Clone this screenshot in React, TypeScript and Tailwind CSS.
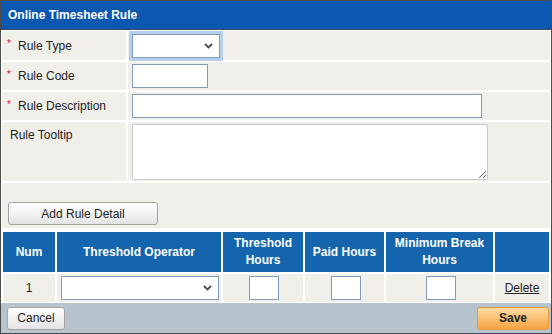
import React from "react";

const Chevron = () => (
  <svg width="9" height="6" viewBox="0 0 9 6" className="absolute right-[7px] top-1/2 -translate-y-1/2 pointer-events-none">
    <path d="M1 1 L4.5 4.5 L8 1" fill="none" stroke="#4a4a4a" strokeWidth="1.8" />
  </svg>
);

const Req = () => (
  <span className="inline-block w-[11px] text-[#e0141e] text-[10px] relative -top-[2px]">*</span>
);

export default function App() {
  const cell = "bg-[#f0efea]";
  const th = "bg-[#1465ae] text-white font-bold text-[12px] leading-[17px] flex items-center justify-center text-center";
  return (
    <div
      className="w-[552px] h-[334px] border border-[#4a4a4a] bg-white flex flex-col text-[12px] text-[#222]"
      style={{ fontFamily: '"Liberation Sans", Arial, sans-serif' }}
    >
      <div className="h-[29px] shrink-0 bg-[#0c57b0] border-b border-[#3b4a5e] pl-[7px] flex items-center text-white font-bold text-[12px]">
        Online Timesheet Rule
      </div>
      <div className="mt-[1px] pl-[1px] pr-[1px] flex flex-col gap-[2px]">
        <div className="flex gap-[2px] h-[29px]">
          <div className={`${cell} w-[124px] pl-[5px] flex items-center`}>
            <Req />Rule Type
          </div>
          <div className={`${cell} flex-1 pl-[4px] flex items-center`}>
            <div className="relative w-[88px] h-[24px] shadow-[0_0_0_3px_#b6cfee]">
              <select className="appearance-none w-full h-full border border-[#7f9db9] bg-white outline-none" />
              <Chevron />
            </div>
          </div>
        </div>
        <div className="flex gap-[2px] h-[28px]">
          <div className={`${cell} w-[124px] pl-[5px] flex items-center`}>
            <Req />Rule Code
          </div>
          <div className={`${cell} flex-1 pl-[4px] flex items-center`}>
            <input className="w-[76px] h-[24px] border border-[#7f9db9] bg-white outline-none" />
          </div>
        </div>
        <div className="flex gap-[2px] h-[28px]">
          <div className={`${cell} w-[124px] pl-[5px] flex items-center`}>
            <Req />Rule Description
          </div>
          <div className={`${cell} flex-1 pl-[4px] flex items-center`}>
            <input className="w-[350px] h-[24px] border border-[#7f9db9] bg-white outline-none" />
          </div>
        </div>
        <div className="flex gap-[2px] h-[59px]">
          <div className={`${cell} w-[124px] pl-[8px] pt-[4px]`}>Rule Tooltip</div>
          <div className={`${cell} flex-1 pl-[4px] flex items-center`}>
            <textarea className="w-[356px] h-[56px] border border-[#c8c8c8] rounded-[2px] bg-white outline-none" />
          </div>
        </div>
        <div className={`${cell} h-[45px] pl-[6px] pb-[3px] flex items-end`}>
          <button className="w-[150px] h-[23px] border border-[#a3a3a3] rounded-[3px] bg-gradient-to-b from-white to-[#e4e4e4] text-[12px] text-[#222]">
            Add Rule Detail
          </button>
        </div>
      </div>
      <div className="mt-[4px] px-[2px] flex flex-col gap-[2px]">
        <div className="flex gap-[2px] h-[40px]">
          <div className={`${th} w-[52px]`}>Num</div>
          <div className={`${th} w-[164px]`}>Threshold Operator</div>
          <div className={`${th} w-[80px]`}>Threshold<br />Hours</div>
          <div className={`${th} w-[79px]`}>Paid Hours</div>
          <div className={`${th} w-[107px]`}>Minimum Break<br />Hours</div>
          <div className={`${th} flex-1`}></div>
        </div>
        <div className="flex gap-[2px] h-[28px]">
          <div className={`${cell} w-[52px] flex items-center justify-center`}>1</div>
          <div className={`${cell} w-[164px] pl-[4px] flex items-center`}>
            <div className="relative w-[158px] h-[24px]">
              <select className="appearance-none w-full h-full border border-[#7f9db9] bg-white outline-none" />
              <Chevron />
            </div>
          </div>
          <div className={`${cell} w-[80px] flex items-center justify-center`}>
            <input className="w-[30px] h-[24px] border border-[#7f9db9] bg-white outline-none ml-[2px]" />
          </div>
          <div className={`${cell} w-[79px] flex items-center justify-center`}>
            <input className="w-[30px] h-[24px] border border-[#7f9db9] bg-white outline-none ml-[2px]" />
          </div>
          <div className={`${cell} w-[107px] flex items-center justify-center`}>
            <input className="w-[30px] h-[24px] border border-[#7f9db9] bg-white outline-none ml-[2px]" />
          </div>
          <div className={`${cell} flex-1 flex items-center justify-center`}>
            <span className="underline text-[#222]">Delete</span>
          </div>
        </div>
      </div>
      <div className="mt-[1px] flex-1 bg-[#b7c4cd] pl-[6px] pr-[2px] flex items-center justify-between">
        <button className="w-[58px] h-[23px] border border-[#a3a3a3] rounded-[3px] bg-gradient-to-b from-white to-[#e4e4e4] text-[12px] text-[#222]">
          Cancel
        </button>
        <button className="w-[72px] h-[23px] border border-[#e39b3f] rounded-[3px] bg-gradient-to-b from-[#fedca0] to-[#f6a33b] text-[12px] font-bold text-[#222]">
          Save
        </button>
      </div>
    </div>
  );
}
